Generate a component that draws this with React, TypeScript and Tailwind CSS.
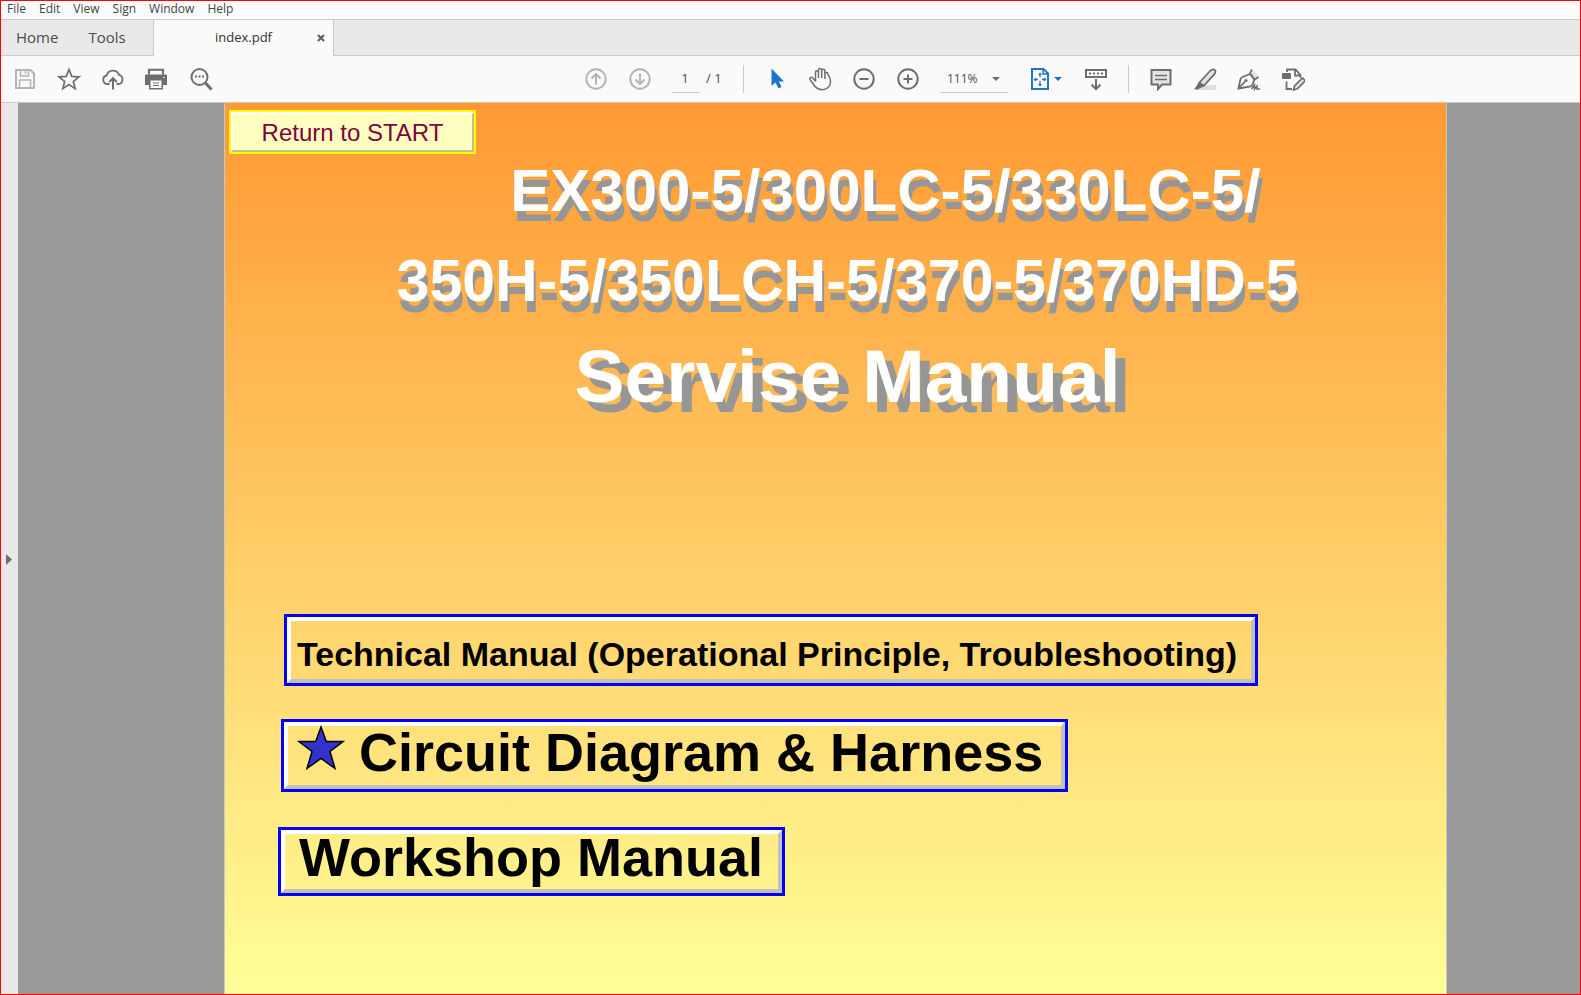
import type { ReactNode } from "react";

const menus = ["File", "Edit", "View", "Sign", "Window", "Help"];

function Icon({ children }: { children: ReactNode }) {
  return (
    <svg viewBox="0 0 24 24" className="size-6" fill="none" stroke="currentColor" strokeWidth="2" aria-hidden="true">
      {children}
    </svg>
  );
}

function ToolButton({ label, tone = "text-[#6e6e6e]", children }: { label: string; tone?: string; children: ReactNode }) {
  return (
    <button type="button" aria-label={label} className={`flex h-full w-11 shrink-0 items-center justify-center ${tone}`}>
      <Icon>{children}</Icon>
    </button>
  );
}

function Divider() {
  return <div className="h-7 w-px shrink-0 bg-[#cacaca]" />;
}

function MenuBar() {
  return (
    <nav className="flex h-[18px] items-start gap-[13px] bg-[#fcfcfc] pl-1.5 text-xs leading-4 text-[#444]">
      {menus.map((item) => (
        <button key={item} type="button">
          {item}
        </button>
      ))}
    </nav>
  );
}

function TabBar() {
  return (
    <div className="flex h-[37px] border-t border-[#c8c8c8] bg-[#e9e9e9] text-[#4b4b4b]">
      <div className="flex w-[152px] shrink-0 items-center gap-[30px] border-b border-[#c8c8c8] pl-[15px] text-[15px]">
        <button type="button">Home</button>
        <button type="button">Tools</button>
      </div>
      <div className="flex w-[181px] shrink-0 items-center border-x border-[#c8c8c8] bg-[#fafafa] pr-2">
        <span className="flex-1 pl-4 text-center text-[13px] text-[#323232]">index.pdf</span>
        <button type="button" aria-label="Close tab">
          <svg viewBox="0 0 8 8" className="size-2" stroke="#5a5a5a" strokeWidth="2" aria-hidden="true">
            <path d="M1 1l6 6M7 1L1 7" />
          </svg>
        </button>
      </div>
      <div className="flex-1 border-b border-[#c8c8c8]" />
    </div>
  );
}

function Toolbar() {
  return (
    <div className="flex h-[47px] items-center border-b border-[#c8c8c8] bg-[#fafafa] pl-0.5 text-xs text-[#4b4b4b]">
      <ToolButton label="Save" tone="text-[#b4b4b4]">
        <path d="M3 3h14.5L21 6.500V21H3z" />
        <path d="M7.500 3v6h8V3M12.500 4v3M6.500 21v-8h11v8" strokeWidth="1.500" />
      </ToolButton>
      <ToolButton label="Star">
        <path d="M12 2.500l2.700 6.900 7.300.4-5.700 4.700 1.900 7.100-6.200-4-6.200 4 1.900-7.100L2 9.800l7.300-.4z" strokeWidth="1.700" />
      </ToolButton>
      <ToolButton label="Upload">
        <path d="M8.500 17H6.200a4.300 4.300 0 0 1-.5-8.500 6.400 6.400 0 0 1 12.300-.6 4.700 4.700 0 0 1 0 9.100h-2.500" strokeWidth="1.800" />
        <path d="M12 22.500V11.500M8.300 15L12 11.200l3.700 3.800" />
      </ToolButton>
      <ToolButton label="Print">
        <path d="M4 7.500V2.800h14v4.700" />
        <path d="M1 7.500h20a1 1 0 0 1 1 1V18h-4v4.500H4V18H0V8.500a1 1 0 0 1 1-1z" fill="currentColor" stroke="none" />
        <path d="M5.500 13.500h11V21h-11z" fill="#fafafa" stroke="none" />
        <path d="M8 16h6M8 18.500h6" strokeWidth="1.200" />
        <path d="M18 10.500h1.500" stroke="#fafafa" strokeWidth="1.200" />
      </ToolButton>
      <ToolButton label="Find">
        <circle cx="10.500" cy="10" r="8" />
        <path d="M16 15.500l6.500 7" strokeWidth="3" />
        <path d="M6 9.500h2M9.500 9.500h2M13 9.500h2" />
      </ToolButton>

      <div className="ml-[351px] flex h-full items-center">
        <ToolButton label="Previous page" tone="text-[#b4b4b4]">
          <circle cx="12" cy="12" r="9.700" />
          <path d="M12 17.500V7M7.500 11.500L12 7l4.500 4.500" />
        </ToolButton>
        <ToolButton label="Next page" tone="text-[#b4b4b4]">
          <circle cx="12" cy="12" r="9.700" />
          <path d="M12 6.500V17M7.500 12.500L12 17l4.500-4.500" />
        </ToolButton>
        <input
          aria-label="Page number"
          defaultValue="1"
          className="ml-2.5 h-7 w-7 border-b border-[#c8c8c8] pr-0.5 pb-0.5 text-center text-[13px] outline-none"
        />
        <span className="w-[43px] pl-1.5 text-[13px] whitespace-pre">/ 1</span>
        <Divider />
        <div className="w-2.5" />
        <ToolButton label="Select" tone="text-[#1f73cc]">
          <path d="M7.500 1.500v17.500l4-3.500 3 6 3-1.500-2.500-5.500h5z" fill="currentColor" stroke="none" />
        </ToolButton>
        <ToolButton label="Pan">
          <path
            d="M7.500 14.500V5.200a1.500 1.500 0 0 1 3 0V11M10.500 11V3.200a1.500 1.500 0 0 1 3.200 0V11M13.700 11V3.800a1.500 1.500 0 0 1 3.200 0V12M16.900 7a1.500 1.500 0 0 1 3 0c.2 1.800 2.600 3 2.600 7.500 0 5-3.500 8.300-8 8.300-5 0-7-2-9.300-5.800L2 12.500c-1-1.700 1.200-3 2.600-1.700l2.900 3.400"
            strokeWidth="1.500"
          />
        </ToolButton>
        <ToolButton label="Zoom out">
          <circle cx="12" cy="12" r="9.700" />
          <path d="M7.500 12h9" />
        </ToolButton>
        <ToolButton label="Zoom in">
          <circle cx="12" cy="12" r="9.700" />
          <path d="M7.500 12h9M12 7.500v9" />
        </ToolButton>
        <div className="relative ml-2.5 flex h-7 w-[68px] items-center border-b border-[#c8c8c8]">
          <select aria-label="Zoom level" defaultValue="111%" className="h-full w-full appearance-none pl-[7px] outline-none">
            <option>100%</option>
            <option>111%</option>
            <option>125%</option>
          </select>
          <svg viewBox="0 0 8 4" className="pointer-events-none absolute right-2 h-1 w-2" fill="#6e6e6e" aria-hidden="true">
            <path d="M0 0h8L4 4z" />
          </svg>
        </div>
        <button type="button" aria-label="Fit page" className="ml-5 flex w-[46px] items-center gap-0.5 text-[#1f73cc]">
          <Icon>
            <path d="M4 2h11.500L20 6.500V22H4z" />
            <path d="M15 2.500V7h5" strokeWidth="1.500" />
            <path d="M12 7v3M12 14v3.500M6.500 12.500H10M14 12.500h3.500" strokeWidth="1.300" />
            <path d="M12 5.500L14 8h-4zM12 19.500l2-2.500h-4zM5.500 12.500L8 10.500v4zM18.500 12.500L16 10.500v4z" fill="currentColor" stroke="none" />
          </Icon>
          <svg viewBox="0 0 8 4" className="h-1 w-2" fill="currentColor" aria-hidden="true">
            <path d="M0 0h8L4 4z" />
          </svg>
        </button>
        <ToolButton label="Read mode">
          <path d="M2 3h20v7H2z" />
          <path d="M5 6.500h14" strokeDasharray="2 2" />
          <path d="M12 12v9.500M7.500 17.500L12 22l4.500-4.500" />
        </ToolButton>
        <div className="w-2.5" />
        <Divider />
        <div className="w-2.5" />
        <ToolButton label="Comment">
          <path d="M2.500 3h19v14.500h-8.500l-4 4.500v-4.500H2.500z" fill="#e4e4e4" />
          <path d="M6 8.500h12M6 12.500h12" strokeWidth="1.500" />
        </ToolButton>
        <ToolButton label="Highlight">
          <path d="M9 18h14v5H3z" fill="#dedede" stroke="none" />
          <path d="M6.500 15.500L17 4c2-2 3.500-2 4.700-1s1 2.600-.7 4.700L10.500 19z" fill="#e4e4e4" strokeWidth="1.800" />
          <path d="M6 14.500l5 5L7.500 21l-3 1.500H1l2.500-3.500z" fill="currentColor" stroke="none" />
        </ToolButton>
        <ToolButton label="Sign">
          <path d="M15.500 2.500L13 6.500l5 6 4-3z" fill="#e4e4e4" stroke="none" />
          <path d="M1.500 21.500L3.500 12q.5-1.500 2-2l7.500-3 4.500 5.500-2 5q-.5 1.500-2 1.800z" strokeWidth="1.800" />
          <path d="M14.800 2.500L13 6.500l4.500 6 4-2.500M1.500 21.500l7-7.500" strokeWidth="1.800" />
          <circle cx="9" cy="13.500" r="1.500" fill="currentColor" stroke="none" />
          <path d="M14.500 22l3-4v4l2.500-3v3h3" strokeWidth="1.500" />
        </ToolButton>
        <ToolButton label="More tools">
          <path d="M6 5V2.500h8.500L19.500 8v3M14 3v5.500h5.500M5.500 14.500V22H11" strokeWidth="1.800" />
          <rect x="1" y="6" width="9" height="6" rx="1" fill="currentColor" stroke="none" />
          <path d="M12.500 23l1-4 8-8 2.800 2.800-8 8z" fill="#e4e4e4" strokeWidth="1.700" />
        </ToolButton>
      </div>
    </div>
  );
}

function ManualLink({ className, children }: { className: string; children: ReactNode }) {
  return (
    <a href="#" className={`block border-3 border-[#0000ff] ${className}`}>
      <span className="flex h-full items-center border-4 border-t-white border-r-[#c0c0c0] border-b-[#c0c0c0] border-l-white whitespace-nowrap">
        {children}
      </span>
    </a>
  );
}

function ManualPage() {
  return (
    <main className="flex-1 border-x border-[#c8c8c8] bg-linear-to-b/srgb from-[#ff9933] to-[#ffff99] pt-[7px] pl-1 font-['Liberation_Sans',Arial,sans-serif]">
      <a href="#" className="block h-11 w-[247px] border-2 border-[#ffff00] text-2xl text-[#800040]">
        <span className="flex h-full items-center justify-center border-2 border-t-white border-r-[#c0c090] border-b-[#c0c090] border-l-white bg-[#ffffc0] pt-0.5">
          Return to START
        </span>
      </a>
      <h1 className="-mt-2 pl-5 text-center font-bold whitespace-nowrap text-white">
        <span className="block pl-[76px] text-[60px] leading-[90px] [text-shadow:3px_10px_0_#969696]">EX300-5/300LC-5/330LC-5/</span>
        <span className="block text-[59px] leading-[90px] [text-shadow:2px_11px_0_#969696]">350H-5/350LCH-5/370-5/370HD-5</span>
        <span className="block text-[75px] leading-[100px] [text-shadow:10px_10px_0_#969696]">Servise Manual</span>
      </h1>
      <div className="mt-[188px] font-bold text-black">
        <ManualLink className="ml-[55px] h-[72px] w-[974px] text-[34px]">
          <span className="pt-2 pl-1.5">Technical Manual (Operational Principle, Troubleshooting)</span>
        </ManualLink>
        <ManualLink className="mt-[33px] ml-[52px] h-[73px] w-[787px] text-[54px] leading-none">
          <svg viewBox="0 0 48 46" className="mb-4 ml-[9px] h-[46px] w-12" aria-hidden="true">
            <path d="M24 2l5.300 14.500H46L33 26.500l5 17L24 33.500 10 43.500l5-17L2 16.500h16.700z" fill="#3333cc" stroke="#000" strokeWidth="1.500" />
          </svg>
          <span className="pb-2 pl-3.5">Circuit Diagram &amp; Harness</span>
        </ManualLink>
        <ManualLink className="mt-[35px] ml-[49px] h-[69px] w-[507px] text-[54px] leading-none">
          <span className="pb-2.5 pl-3.5">Workshop Manual</span>
        </ManualLink>
      </div>
    </main>
  );
}

export default function App() {
  return (
    <div className="flex min-h-screen flex-col border border-[#ff0000] bg-[#999] font-['Open_Sans','Noto_Sans',sans-serif]">
      <MenuBar />
      <TabBar />
      <Toolbar />
      <div className="flex flex-1">
        <aside className="flex w-[17px] shrink-0 items-center bg-[#e9e9e9] pt-[22px] pl-[5px]">
          <button type="button" aria-label="Show navigation pane">
            <svg viewBox="0 0 6 11" className="h-[11px] w-1.5" fill="#6e6e6e" aria-hidden="true">
              <path d="M0 0l6 5.500L0 11z" />
            </svg>
          </button>
        </aside>
        <div className="flex flex-1 pr-[133px] pl-[206px]">
          <ManualPage />
        </div>
      </div>
    </div>
  );
}
